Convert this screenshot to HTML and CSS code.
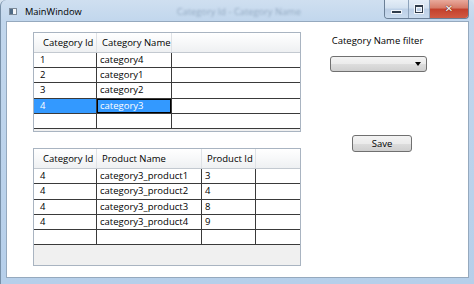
FILE: index.html
```html
<!DOCTYPE html>
<html>
<head>
<meta charset="utf-8">
<link rel="stylesheet" href="styles.css">
</head>
<body>
<div class="window">
  <div class="titlebar">
    <span class="appicon"><span class="appicon-side"></span></span>
    <span class="title">MainWindow</span>
    <span class="ghost">Category Id - Category Name</span>
    <div class="controls">
      <span class="btn min"><span class="min-glyph"></span></span>
      <span class="btn max"><span class="max-glyph"></span></span>
      <span class="btn close"><span class="x-glyph">✕</span></span>
    </div>
  </div>
  <div class="client">
    <div class="grids">
      <div class="grid g1">
        <div class="hdr">
          <div class="c w1 h1">Category Id</div>
          <div class="c w2a">Category Name</div>
          <div class="c f"></div>
        </div>
        <div class="row"><div class="c w1 d1">1</div><div class="c w2a">category4</div><div class="c f"></div></div>
        <div class="row"><div class="c w1 d1">2</div><div class="c w2a">category1</div><div class="c f"></div></div>
        <div class="row"><div class="c w1 d1">3</div><div class="c w2a">category2</div><div class="c f"></div></div>
        <div class="row sel"><div class="c w1 d1 selcell">4</div><div class="c w2a selcell focus">category3</div><div class="c f"></div></div>
        <div class="row"><div class="c w1 d1"></div><div class="c w2a"></div><div class="c f"></div></div>
      </div>
      <div class="grid g2">
        <div class="hdr">
          <div class="c w1 h1">Category Id</div>
          <div class="c w2b">Product Name</div>
          <div class="c w3">Product Id</div>
          <div class="c f"></div>
        </div>
        <div class="row r2"><div class="c w1 d1">4</div><div class="c w2b">category3_product1</div><div class="c w3">3</div><div class="c f"></div></div>
        <div class="row r2"><div class="c w1 d1">4</div><div class="c w2b">category3_product2</div><div class="c w3">4</div><div class="c f"></div></div>
        <div class="row r2"><div class="c w1 d1">4</div><div class="c w2b">category3_product3</div><div class="c w3">8</div><div class="c f"></div></div>
        <div class="row r2"><div class="c w1 d1">4</div><div class="c w2b">category3_product4</div><div class="c w3">9</div><div class="c f"></div></div>
        <div class="row r2"><div class="c w1 d1"></div><div class="c w2b"></div><div class="c w3"></div><div class="c f"></div></div>
      </div>
    </div>
    <div class="panel">
      <div class="label">Category Name filter</div>
      <div class="combo"><span class="arrow"></span></div>
      <div class="save">Save</div>
    </div>
  </div>
</div>
</body>
</html>
```
FILE: styles.css
```css
html, body {
  margin: 0;
  padding: 0;
  background: #d6e3f0;
}
body {
  font-family: "Open Sans", "Noto Sans", sans-serif;
  font-size: 9.5px;
  color: #000;
}
.window {
  width: 474px;
  height: 284px;
  box-sizing: border-box;
  background: linear-gradient(180deg, #cfdff0 0px, #c2d7ed 20px, #b6cfea 100%);
  border-radius: 6px 6px 0 0;
  border-left: 1px solid #7890a8;
  display: flex;
  flex-direction: column;
}
.titlebar {
  height: 21px;
  display: flex;
  align-items: flex-start;
  position: relative;
}
.appicon {
  margin: 8px 0 0 8px;
  width: 8px;
  height: 7px;
  box-sizing: border-box;
  border: 1px solid #7c8a99;
  background: #f4f6f8;
  display: flex;
}
.appicon-side {
  width: 3px;
  height: 100%;
  background: #4f6b86;
}
.title {
  margin: 5px 0 0 8px;
  font-size: 9.3px;
  line-height: 14px;
  color: #000;
}
.ghost {
  margin: 5px 0 0 95px;
  font-size: 9.3px;
  line-height: 14px;
  color: #93a9c1;
  filter: blur(1.3px);
}
.controls {
  margin-left: auto;
  margin-right: 5px;
  display: flex;
  height: 18px;
  border: 1px solid #6a7f96;
  border-top: none;
  border-radius: 0 0 4px 4px;
  overflow: hidden;
}
.btn {
  display: flex;
  align-items: center;
  justify-content: center;
  height: 18px;
}
.min, .max {
  background: linear-gradient(180deg, #e4edf7 0%, #d3e1f0 45%, #bccfe6 50%, #c9dbee 100%);
  border-right: 1px solid #8ea3bb;
}
.min { width: 23px; }
.max { width: 20px; }
.close {
  width: 38px;
  background: linear-gradient(180deg, #e8a99c 0%, #d67a67 45%, #c3402c 50%, #d15a42 100%);
}
.min-glyph {
  width: 9px;
  height: 2px;
  margin-top: 6px;
  background: #2f3c4b;
  box-shadow: 0 0 0 1px #f2f6fa;
}
.max-glyph {
  width: 6px;
  height: 5px;
  border: 1px solid #2f3c4b;
  border-top-width: 2px;
  box-shadow: 0 0 0 1px #f2f6fa, inset 0 0 0 1px #f2f6fa;
}
.x-glyph {
  color: #fff;
  font-family: "DejaVu Sans", sans-serif;
  font-size: 10px;
  font-weight: bold;
  line-height: 10px;
  text-shadow: 0 0 1px #5a1a10, 0 0 1px #5a1a10;
}
.client {
  margin: 0 5px 0 5px;
  height: 257px;
  box-sizing: border-box;
  background: #fff;
  border: 1px solid #95a9be;
  display: flex;
}
.grids {
  padding: 10px 0 0 26px;
  display: flex;
  flex-direction: column;
  gap: 16px;
}
.grid {
  width: 268px;
  box-sizing: border-box;
  border: 1px solid #a9b4c1;
  background: #f0f0f0;
  display: flex;
  flex-direction: column;
}
.g1 { height: 100px; }
.g2 { height: 118px; }
.hdr {
  display: flex;
  height: 20px;
  flex: none;
  box-sizing: border-box;
  border-bottom: 1px solid #c3c9d0;
  background: linear-gradient(180deg, #ffffff 0%, #f7f8f9 50%, #eef0f2 100%);
}
.hdr .c {
  line-height: 19px;
  padding-left: 5px;
  border-right: 1px solid #dfe2e6;
}
.hdr .c.h1 { padding-left: 9px; }
.hdr .c.f { border-right: none; }
.c {
  box-sizing: border-box;
  white-space: nowrap;
  overflow: hidden;
}
.row {
  display: flex;
  height: 15.2px;
  flex: none;
  box-sizing: border-box;
  border-bottom: 1px solid #3a3a3a;
  background: #fff;
}
.row.r2 { height: 15.3px; }
.row .c {
  line-height: 14px;
  padding-left: 3px;
  border-right: 1px solid #3a3a3a;
}
.row .c.d1 { padding-left: 6px; }
.row .c.f { border-right: none; }
.w1 { width: 63px; }
.w2a { width: 75px; }
.w2b { width: 105px; }
.w3 { width: 54px; }
.f { flex: 1; }
.selcell {
  background: #3399ff;
  color: #fff;
}
.focus {
  box-shadow: inset 0 0 0 1px #000;
}
.panel {
  margin-left: 29px;
  width: 97px;
  padding-top: 12px;
  display: flex;
  flex-direction: column;
}
.label {
  text-align: center;
  line-height: 14px;
  margin-left: -2px;
}
.combo {
  margin-top: 8px;
  height: 16px;
  box-sizing: border-box;
  border: 1px solid #707070;
  border-radius: 3px;
  background: linear-gradient(180deg, #f3f3f3 0%, #ebebeb 50%, #dddddd 51%, #cfcfcf 100%);
  display: flex;
  align-items: center;
  justify-content: flex-end;
  padding-right: 5px;
}
.arrow {
  width: 0;
  height: 0;
  border-left: 3px solid transparent;
  border-right: 3px solid transparent;
  border-top: 4px solid #000;
}
.save {
  margin: 63px 0 0 22px;
  width: 60px;
  height: 17px;
  box-sizing: border-box;
  border: 1px solid #707070;
  border-radius: 3px;
  background: linear-gradient(180deg, #f3f3f3 0%, #ebebeb 50%, #dddddd 51%, #cfcfcf 100%);
  text-align: center;
  line-height: 15px;
}
```
